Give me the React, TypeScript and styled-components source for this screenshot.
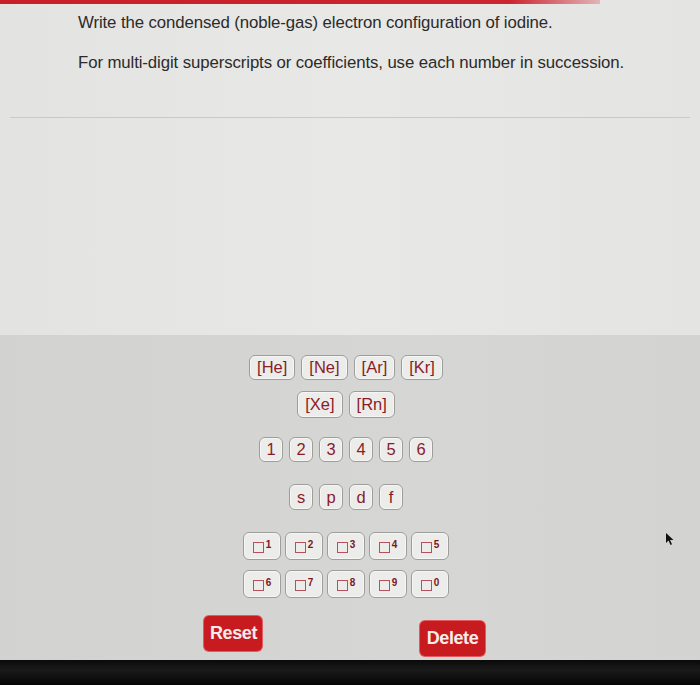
import React from "react";
import styled, { createGlobalStyle } from "styled-components";

const GlobalStyle = createGlobalStyle`
  html, body {
    margin: 0;
    padding: 0;
    background: #e6e6e4;
  }
  body {
    font-family: "Liberation Sans", Arial, sans-serif;
  }
`;

const Page = styled.div`
  width: 700px;
  height: 685px;
  display: flex;
  flex-direction: column;
  position: relative;
  overflow: hidden;
  background: linear-gradient(90deg, #e3e3e1 0%, #e8e8e6 50%, #e4e4e2 100%);
`;

const TopBar = styled.div`
  height: 4px;
  width: 600px;
  background: linear-gradient(90deg, #c81f28 0%, #cc2530 85%, #e2b4b8 100%);
`;

const Prompt = styled.div`
  padding: 9px 0 0 78px;
  color: #2b2b2b;
  font-size: 16.8px;
  letter-spacing: -0.1px;

  p {
    margin: 0 0 20px 0;
    line-height: 20px;
  }
`;

const Divider = styled.hr`
  margin: 24px 10px 0 10px;
  border: none;
  border-top: 1px solid #c9c9c7;
`;

const AnswerArea = styled.div`
  flex: 1;
`;

const Keypad = styled.div`
  height: 325px;
  background: linear-gradient(90deg, #d2d2d0 0%, #d6d6d4 60%, #d3d3d1 100%);
  display: flex;
  flex-direction: column;
  align-items: center;
  padding: 20px 8px 0 0;
  box-sizing: border-box;
`;

const KeyRow = styled.div<{ $gap: number; $top: number }>`
  display: flex;
  gap: ${p => p.$gap}px;
  margin-top: ${p => p.$top}px;
`;

const Key = styled.button<{ $w?: number; $h?: number }>`
  height: ${p => p.$h ?? 25}px;
  min-width: ${p => p.$w ?? 24}px;
  padding: 0 ${p => (p.$w ? 0 : 7)}px;
  box-sizing: border-box;
  border: 1.5px solid #9d9d9b;
  border-radius: 6px;
  background: #ececea;
  color: #8a1c28;
  font-family: "Liberation Sans", Arial, sans-serif;
  font-size: 16.5px;
  display: flex;
  align-items: center;
  justify-content: center;
  box-shadow: inset 0 0 0 1px #f6f6f4;
`;

const Blank = styled.span`
  width: 9px;
  height: 9px;
  border: 1px solid #b5505d;
  display: inline-block;
  margin-top: 3px;
`;

const Sup = styled.sup`
  font-size: 10px;
  font-weight: bold;
  margin-left: 2px;
  color: #7a1820;
  position: relative;
  top: -2px;
`;

const ActionRow = styled.div`
  width: 281px;
  display: flex;
  justify-content: space-between;
  align-items: flex-start;
  margin: 18px 0 0 -3px;
`;

const ActionButton = styled.button<{ $w: number; $drop?: number }>`
  width: ${p => p.$w}px;
  height: 35px;
  margin-top: ${p => p.$drop ?? 0}px;
  border: none;
  border-radius: 5px;
  background: #c81b20;
  color: #f6ecec;
  font-family: "Liberation Sans", Arial, sans-serif;
  font-size: 18px;
  font-weight: bold;
  letter-spacing: -0.4px;
  box-shadow: 0 0 0 1px #e45a60;
`;

const Bezel = styled.div`
  height: 25px;
  background: linear-gradient(180deg, #0a0a0a 0%, #1a1a1a 40%, #050505 100%);
`;

const Cursor = styled.svg`
  position: absolute;
  left: 665px;
  top: 532px;
`;

const elements = ["[He]", "[Ne]", "[Ar]", "[Kr]"];
const elements2 = ["[Xe]", "[Rn]"];
const numbers = ["1", "2", "3", "4", "5", "6"];
const orbitals = ["s", "p", "d", "f"];
const sups1 = ["1", "2", "3", "4", "5"];
const sups2 = ["6", "7", "8", "9", "0"];

export default function App() {
  return (
    <Page>
      <GlobalStyle />
      <TopBar />
      <Prompt>
        <p>Write the condensed (noble-gas) electron configuration of iodine.</p>
        <p>For multi-digit superscripts or coefficients, use each number in succession.</p>
      </Prompt>
      <Divider />
      <AnswerArea />
      <Keypad>
        <KeyRow $gap={6} $top={0}>
          {elements.map(e => <Key key={e}>{e}</Key>)}
        </KeyRow>
        <KeyRow $gap={6} $top={11}>
          {elements2.map(e => <Key key={e} $h={27}>{e}</Key>)}
        </KeyRow>
        <KeyRow $gap={6} $top={19}>
          {numbers.map(n => <Key key={n} $w={24}>{n}</Key>)}
        </KeyRow>
        <KeyRow $gap={6} $top={22}>
          {orbitals.map(o => <Key key={o} $w={24} $h={26}>{o}</Key>)}
        </KeyRow>
        <KeyRow $gap={4} $top={22}>
          {sups1.map(s => (
            <Key key={s} $w={38} $h={28}>
              <Blank />
              <Sup>{s}</Sup>
            </Key>
          ))}
        </KeyRow>
        <KeyRow $gap={4} $top={10}>
          {sups2.map(s => (
            <Key key={s} $w={38} $h={28}>
              <Blank />
              <Sup>{s}</Sup>
            </Key>
          ))}
        </KeyRow>
        <ActionRow>
          <ActionButton $w={58}>Reset</ActionButton>
          <ActionButton $w={65} $drop={5}>Delete</ActionButton>
        </ActionRow>
      </Keypad>
      <Bezel />
      <Cursor width="10" height="14" viewBox="0 0 10 14">
        <path d="M1 1 L1 11 L3.5 8.5 L5.5 13 L7 12.3 L5 8 L8.5 8 Z" fill="#111" />
      </Cursor>
    </Page>
  );
}
